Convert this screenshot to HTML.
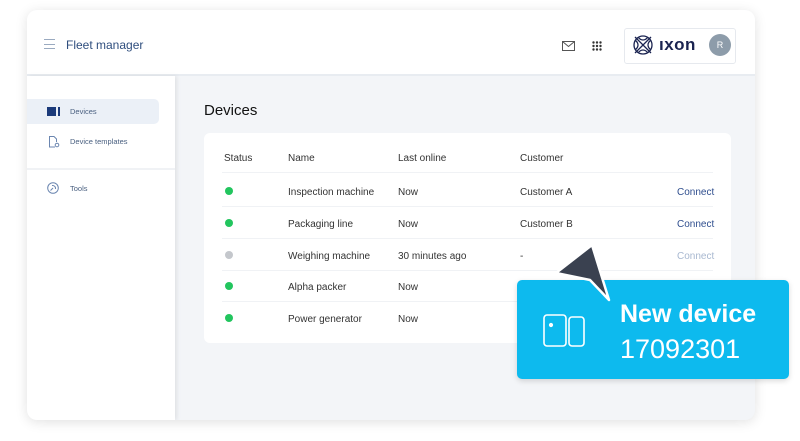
<!DOCTYPE html><html><head><style>
body{margin:0;width:800px;height:441px;background:#fff;font-family:"Liberation Sans",sans-serif;position:relative;overflow:hidden}
.frame{position:absolute;left:27px;top:10px;width:728px;height:410px;border-radius:10px;background:#f3f5f8;box-shadow:0 2px 12px rgba(0,0,0,.12);overflow:hidden}
.hdr{position:absolute;left:0;top:0;width:728px;height:64px;background:#fff;border-bottom:2px solid #e8ecf1}
.side{position:absolute;left:0;top:66px;width:148px;height:344px;background:#fff;box-shadow:2px 0 4px rgba(0,0,0,.08)}
.t{position:absolute;white-space:nowrap}
.card{position:absolute;left:177px;top:123px;width:527px;height:210px;background:#fff;border-radius:6px}
.row{position:absolute;left:18px;width:491px;border-top:1px solid #f0f2f5}
.dot{position:absolute;width:8px;height:8px;border-radius:50%;background:#22c55e}
.c{font-size:10px;color:#333}
</style></head><body>
<div class="frame">
<div class="hdr">
<div class="t" style="left:17px;top:29px;width:11px;border-top:1px solid #9aaac0;border-bottom:1px solid #9aaac0;height:4px"></div>
<div class="t" style="left:17px;top:38px;width:11px;border-top:1px solid #9aaac0"></div>
<div class="t" style="left:39px;top:28px;font-size:12px;color:#2f4e7e">Fleet manager</div>
<svg class="t" style="left:535px;top:31px" width="13" height="10"><rect x=".5" y=".5" width="12" height="9" fill="none" stroke="#555"/><path d="M.5 .5L6.5 5.5 12.5 .5" fill="none" stroke="#555"/></svg>
<svg class="t" style="left:565px;top:31px" width="10" height="10" fill="#333"><circle cx="1.5" cy="1.5" r="1.2"/><circle cx="5" cy="1.5" r="1.2"/><circle cx="8.5" cy="1.5" r="1.2"/><circle cx="1.5" cy="5" r="1.2"/><circle cx="5" cy="5" r="1.2"/><circle cx="8.5" cy="5" r="1.2"/><circle cx="1.5" cy="8.5" r="1.2"/><circle cx="5" cy="8.5" r="1.2"/><circle cx="8.5" cy="8.5" r="1.2"/></svg>
<div class="t" style="left:597px;top:18px;width:110px;height:34px;border:1px solid #e6e9ee;border-radius:3px"></div>
<svg class="t" style="left:605px;top:24px" width="22" height="22" fill="none" stroke="#1a2350" stroke-width="1.3"><path d="M3 3L19 19M19 3L3 19"/><circle cx="11" cy="11" r="9"/><path d="M6 3C9 7 13 7 16 3M6 19C9 15 13 15 16 19M3 6C7 9 7 13 3 16M19 6C15 9 15 13 19 16"/></svg>
<div class="t" style="left:632px;top:25px;font-size:17px;font-weight:bold;color:#1a2350;letter-spacing:.5px">ıxon</div>
<div class="t" style="left:682px;top:24px;width:22px;height:22px;border-radius:50%;background:#8d9caa;color:#fff;font-size:9px;text-align:center;line-height:22px">R</div>
</div>
<div class="side">
<div class="t" style="left:0;top:23px;width:132px;height:25px;background:#ebf0f7;border-radius:0 5px 5px 0"></div>
<div class="t" style="left:20px;top:31px;width:9px;height:9px;background:#1b3a7a"></div><div class="t" style="left:31px;top:31px;width:2px;height:9px;background:#1b3a7a"></div>
<div class="t" style="left:43px;top:31px;font-size:7.5px;color:#4a6080">Devices</div>
<svg class="t" style="left:21px;top:60px" width="12" height="12" fill="none" stroke="#6b86b0"><path d="M7 11H1.5V.5H6L8.5 3V6"/><circle cx="9" cy="9" r="1.8"/></svg>
<div class="t" style="left:43px;top:61px;font-size:7.5px;color:#4a6080">Device templates</div>
<div class="t" style="left:0;top:92px;width:148px;border-top:2px solid #f0f2f5"></div>
<svg class="t" style="left:20px;top:106px" width="12" height="12" fill="none" stroke="#6b86b0"><circle cx="6" cy="6" r="5.3"/><path d="M3.5 8.5L6 6M5 3.5A3 3 0 0 1 8.5 7"/></svg>
<div class="t" style="left:43px;top:108px;font-size:7.5px;color:#4a6080">Tools</div>
</div>
<div class="t" style="left:177px;top:92px;font-size:15px;color:#111">Devices</div>
<div class="card">
<div class="t c" style="left:20px;top:20px">Status</div><div class="t c" style="left:84px;top:20px">Name</div><div class="t c" style="left:194px;top:20px">Last online</div><div class="t c" style="left:316px;top:20px">Customer</div>
<div class="row" style="top:39px"></div><div class="row" style="top:73px"></div><div class="row" style="top:105px"></div><div class="row" style="top:137px"></div><div class="row" style="top:168px"></div>
<div class="dot" style="left:21px;top:54px"></div><div class="t c" style="left:84px;top:54px">Inspection machine</div><div class="t c" style="left:194px;top:54px">Now</div><div class="t c" style="left:316px;top:54px">Customer A</div><div class="t c" style="left:473px;top:54px;color:#2f4e8e">Connect</div>
<div class="dot" style="left:21px;top:86px"></div><div class="t c" style="left:84px;top:86px">Packaging line</div><div class="t c" style="left:194px;top:86px">Now</div><div class="t c" style="left:316px;top:86px">Customer B</div><div class="t c" style="left:473px;top:86px;color:#2f4e8e">Connect</div>
<div class="dot" style="left:21px;top:118px;background:#c4c7cc"></div><div class="t c" style="left:84px;top:118px">Weighing machine</div><div class="t c" style="left:194px;top:118px">30 minutes ago</div><div class="t c" style="left:316px;top:118px">-</div><div class="t c" style="left:473px;top:118px;color:#a8b8d0">Connect</div>
<div class="dot" style="left:21px;top:149px"></div><div class="t c" style="left:84px;top:149px">Alpha packer</div><div class="t c" style="left:194px;top:149px">Now</div>
<div class="dot" style="left:21px;top:181px"></div><div class="t c" style="left:84px;top:181px">Power generator</div><div class="t c" style="left:194px;top:181px">Now</div>
</div>
</div>
<div class="t" style="left:517px;top:280px;width:272px;height:99px;background:#0dbaee;border-radius:5px;box-shadow:0 2px 6px rgba(0,0,0,.15)"></div>
<svg class="t" style="left:543px;top:311px" width="44" height="37" fill="none" stroke="#fff" stroke-width="1.6"><rect x="1" y="4" width="22" height="31" rx="3"/><rect x="26" y="6" width="15" height="29" rx="3"/><circle cx="8" cy="14" r="1.3" fill="#fff"/></svg>
<div class="t" style="left:620px;top:300px;font-size:25px;font-weight:bold;color:#fff">New device</div>
<div class="t" style="left:620px;top:334px;font-size:27px;color:#fff">17092301</div>
<svg class="t" style="left:550px;top:240px" width="65" height="65"><path d="M42 5L59 60 40 40 6 33Z" fill="#3a4150" stroke="#fff" stroke-width="2.5" stroke-linejoin="round"/></svg>
</body></html>
